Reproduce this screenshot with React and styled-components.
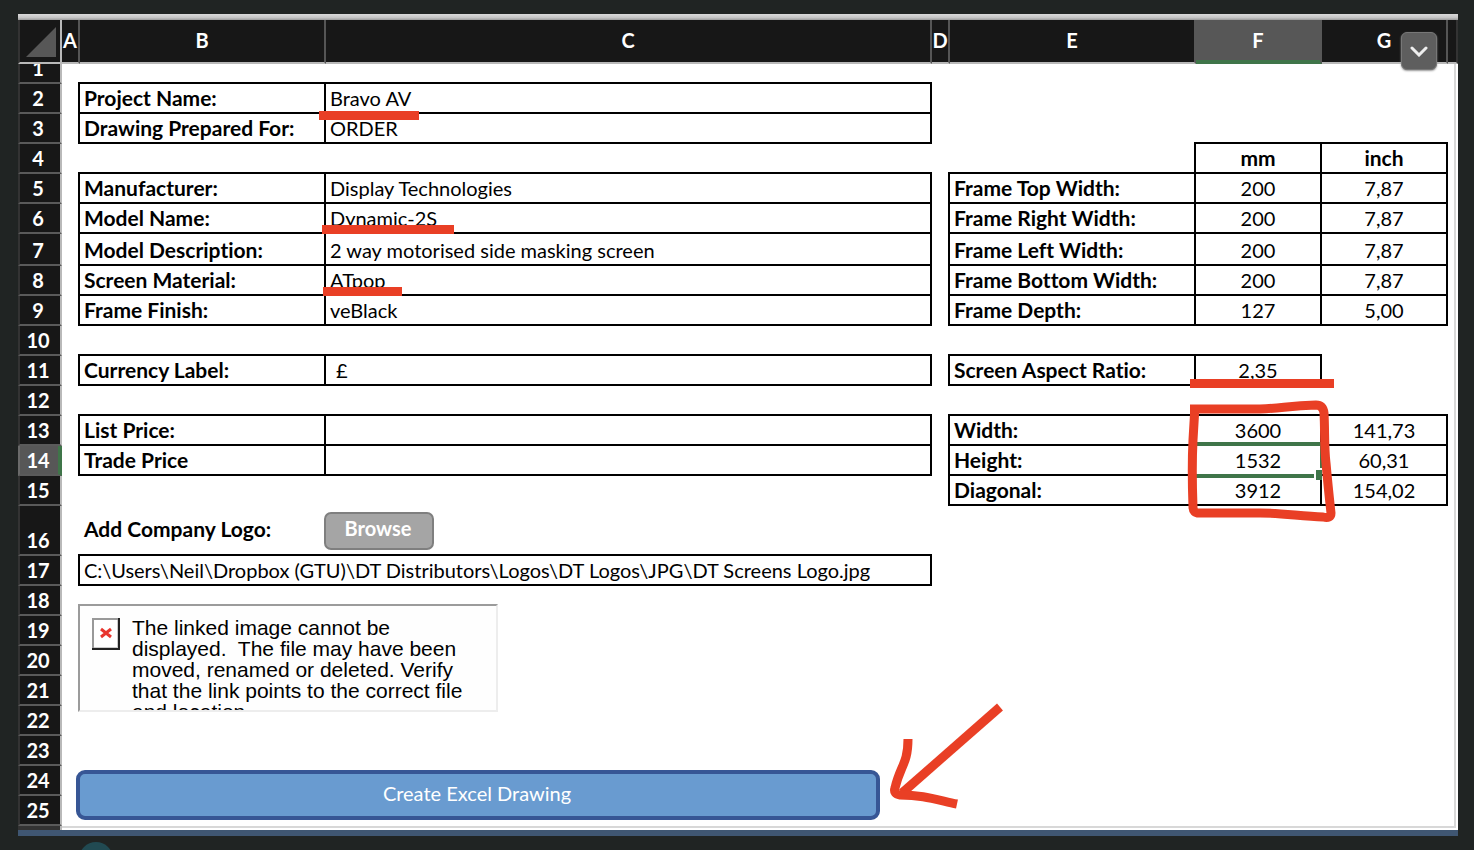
import React from 'react';
import styled, { createGlobalStyle } from 'styled-components';

const GlobalStyle = createGlobalStyle`
  *, *::before, *::after { box-sizing: border-box; }
  body {
    margin: 0;
    background: #202423;
    font-family: Lato, Carlito, 'Open Sans', sans-serif;
    font-size: 20px;
    line-height: 28px;
    font-variant-ligatures: none;
    color: #000;
  }
`;

const RED = '#e93f25';
const GREEN = '#3f7549';
const HEAD = '#171717';
const HEAD_ACTIVE = '#575757';

const Page = styled.div`
  display: flex;
  flex-direction: column;
  min-height: 100vh;
  padding: 14px 16px 0 18px;
`;

const Window = styled.main`
  border-bottom: 6px solid #3f5672;
  background: #fff;
`;

const TopBar = styled.div`
  height: 6px;
  background: linear-gradient(#dadada, #c4c4c4 60%, #9a9a9a);
`;

const Dock = styled.footer`
  flex: 1 1 0;
  min-height: 14px;
  overflow: hidden;
  display: flex;
  align-items: flex-start;
  padding: 6px 0 0 61px;
  height: 14px;
`;

const DockDot = styled.span`
  flex: none;
  width: 34px;
  height: 34px;
  border-radius: 50%;
  background: #214a52;
`;

const Sheet = styled.table`
  width: 100%;
  table-layout: fixed;
  border-collapse: separate;
  border-spacing: 0;
`;

const Col = styled.col`
  width: ${(p) => (p.$w ? `${p.$w}px` : 'auto')};
`;

const ColumnHead = styled.th`
  position: relative;
  height: 44px;
  padding: 0 0 2px;
  text-align: center;
  font-weight: 700;
  color: #fff;
  background: ${(p) => (p.$active ? HEAD_ACTIVE : HEAD)};
  border-right: 2px solid ${(p) => (p.$active ? HEAD_ACTIVE : p.$edge || '#555')};
  border-bottom: 2px solid ${(p) => (p.$active ? GREEN : '#b9b9b9')};
  box-shadow: ${(p) => (p.$active ? `inset 0 -2px ${GREEN}` : 'none')};
`;

const Corner = styled(ColumnHead)`
  border-left: 2px solid #333;
  border-right-color: #b9b9b9;
`;

const CornerMark = styled.svg`
  display: block;
  margin: 4px 0 0 6px;
`;

const RowHead = styled.th`
  height: ${(p) => p.$h}px;
  padding: 0 ${(p) => (p.$active ? 2 : 4)}px 0 0;
  vertical-align: bottom;
  text-align: center;
  font-weight: 700;
  color: #fff;
  background: ${(p) => (p.$active ? HEAD_ACTIVE : HEAD)};
  border-left: 2px solid ${(p) => (p.$active ? '#6a6a6a' : '#333')};
  border-bottom: 2px solid #5a5a5a;
  border-right: ${(p) => (p.$active ? `4px solid ${GREEN}` : '2px solid #b9b9b9')};
`;

const RowNumber = styled.div`
  display: flex;
  align-items: flex-end;
  justify-content: center;
  height: ${(p) => p.$h}px;
  overflow: hidden;
`;

const Cell = styled.td`
  position: relative;
  padding: 0 0 ${(p) => (p.$middle ? 2 : 0)}px ${(p) => (p.$center ? 0 : p.$indent || 4)}px;
  vertical-align: ${(p) => (p.$middle ? 'middle' : 'bottom')};
  text-align: ${(p) => (p.$center ? 'center' : 'left')};
  font-size: ${(p) => (p.$bold ? 21 : 20)}px;
  font-weight: ${(p) => (p.$bold ? 700 : 400)};
  white-space: nowrap;
  border-right: 2px solid ${(p) => (p.$right ? '#000' : 'transparent')};
  border-bottom: 2px solid ${(p) => (p.$bottom ? '#000' : 'transparent')};
  ${(p) =>
    p.$corner &&
    'background: linear-gradient(#000, #000) right bottom / 2px 2px no-repeat border-box;'}
`;

const EdgeCell = styled.td`
  padding: 0;
  box-shadow: inset -2px 0 #fff, inset -4px 0 #d8d8d8;
`;

const StubHead = styled.td`
  height: 4px;
  padding: 0;
  background: #333;
  border-right: 2px solid #b9b9b9;
`;

const StubCell = styled.td`
  padding: 0;
  box-shadow: inset -2px 0 #fff, inset 0 2px #d8d8d8;
`;

const Underline = styled.span`
  position: absolute;
  z-index: 2;
  left: ${(p) => p.$left}px;
  top: ${(p) => p.$top}px;
  width: ${(p) => p.$width}px;
  height: 9px;
  background: ${RED};
`;

const Selection = styled.span`
  position: absolute;
  z-index: 1;
  inset: -4px -2px -4px 0;
  border: solid ${GREEN};
  border-width: 4px 2px 4px 0;

  &::after {
    content: '';
    position: absolute;
    right: -2px;
    bottom: -6px;
    width: 8px;
    height: 12px;
    background: ${GREEN};
    border: solid #fff;
    border-width: 2px 0 0 2px;
  }
`;

const Scribble = styled.svg`
  position: absolute;
  z-index: 3;
  left: -10px;
  top: -18px;
  overflow: visible;
  pointer-events: none;
`;

const ArrowMark = styled.svg`
  position: absolute;
  left: 100%;
  top: -70px;
  pointer-events: none;
`;

const MenuButton = styled.button`
  position: absolute;
  z-index: 2;
  top: 12px;
  right: 9px;
  display: flex;
  align-items: center;
  justify-content: center;
  width: 36px;
  height: 38px;
  padding: 0;
  border: 1px solid #777;
  border-radius: 6px;
  background: #5e5e5e;
  box-shadow: 0 1px 2px #999;
`;

const BrowseButton = styled.button`
  display: block;
  width: 110px;
  height: 38px;
  margin: 4px 0 0 -6px;
  padding: 0 2px 6px 0;
  border: 2px solid #7f7f7f;
  border-radius: 7px;
  background: #a5a5a5;
  color: #fff;
  font: inherit;
  font-weight: 700;
`;

const MissingImage = styled.div`
  position: absolute;
  z-index: 1;
  left: -2px;
  top: 18px;
  display: flex;
  align-items: flex-start;
  gap: 12px;
  width: 420px;
  height: 108px;
  padding: 12px;
  overflow: hidden;
  border: 2px solid #ededed;
  border-top-color: #9b9b9b;
  border-left-color: #9b9b9b;
  background: #fefefe;
`;

const BrokenIcon = styled.svg`
  flex: none;
`;

const MissingText = styled.p`
  width: 350px;
  margin: -1px 0 0;
  font-family: 'Liberation Sans', Arial, sans-serif;
  font-size: 21px;
  line-height: 21px;
  font-weight: 400;
  white-space: normal;
`;

const CreateArea = styled.div`
  position: absolute;
  z-index: 1;
  top: 4px;
  left: -4px;
  right: 50px;
`;

const CreateButton = styled.button`
  display: block;
  width: 100%;
  height: 50px;
  padding: 0 2px 4px 0;
  border: 4px solid #375695;
  border-radius: 9px;
  background: #699bd0;
  color: #fff;
  font: inherit;
  text-align: center;
`;

const ALL_COLUMNS = ['A', 'B', 'C', 'D', 'E', 'F', 'G'];

const VALUES = {
  2: { B: 'Project Name:', C: 'Bravo AV' },
  3: { B: 'Drawing Prepared For:', C: 'ORDER' },
  4: { F: 'mm', G: 'inch' },
  5: { B: 'Manufacturer:', C: 'Display Technologies', E: 'Frame Top Width:', F: '200', G: '7,87' },
  6: { B: 'Model Name:', C: 'Dynamic-2S', E: 'Frame Right Width:', F: '200', G: '7,87' },
  7: { B: 'Model Description:', C: '2 way motorised side masking screen', E: 'Frame Left Width:', F: '200', G: '7,87' },
  8: { B: 'Screen Material:', C: 'ATpop', E: 'Frame Bottom Width:', F: '200', G: '7,87' },
  9: { B: 'Frame Finish:', C: 'veBlack', E: 'Frame Depth:', F: '127', G: '5,00' },
  11: { B: 'Currency Label:', C: '£', E: 'Screen Aspect Ratio:', F: '2,35' },
  13: { B: 'List Price:', C: '', E: 'Width:', F: '3600', G: '141,73' },
  14: { B: 'Trade Price', C: '', E: 'Height:', F: '1532', G: '60,31' },
  15: { E: 'Diagonal:', F: '3912', G: '154,02' },
  17: { B: 'C:\\Users\\Neil\\Dropbox (GTU)\\DT Distributors\\Logos\\DT Logos\\JPG\\DT Screens Logo.jpg', C: '' },
};

const ROW_HEIGHTS = { 1: 20, 7: 32, 16: 50 };

const MARKS = {
  C2: <Underline $left={-7} $top={27} $width={100} />,
  C6: <Underline $left={-4} $top={21} $width={132} />,
  C8: <Underline $left={-3} $top={21} $width={79} />,
  F11: <Underline $left={-6} $top={23} $width={144} />,
  F13: (
    <Scribble width="154" height="128" viewBox="1186 398 154 128" fill="none" stroke={RED} strokeWidth="9" strokeLinejoin="round" aria-hidden="true">
      <path d="M1190 409H1260C1282 408 1289 406 1316 405Q1323 405 1324 413C1325 430 1324 447 1326 463C1328 486 1329 495 1331 513Q1331 519 1323 517C1300 516 1280 513 1260 513H1199Q1193 513 1193 507C1192 480 1192 460 1193 440L1195 406" />
    </Scribble>
  ),
  F14: <Selection />,
};

const boxed = (col, row) => VALUES[row] !== undefined && VALUES[row][col] !== undefined;

function GridCell({ col, row, ...rest }) {
  const next = ALL_COLUMNS[ALL_COLUMNS.indexOf(col) + 1];
  const self = boxed(col, row);
  return (
    <Cell
      $right={self || boxed(next, row)}
      $bottom={self || boxed(col, row + 1)}
      $corner={self || boxed(next, row) || boxed(col, row + 1) || boxed(next, row + 1)}
      $bold={col === 'B' || col === 'E' || row === 4}
      $center={col === 'F' || col === 'G'}
      $indent={row === 11 && col === 'C' ? 10 : 4}
      {...rest}
    >
      {self ? VALUES[row][col] : null}
      {MARKS[col + row]}
    </Cell>
  );
}

function LeftCells({ row }) {
  if (row === 16) {
    return (
      <>
        <Cell $bold $middle $bottom $corner>Add Company Logo:</Cell>
        <Cell $middle $bottom $corner><BrowseButton type="button">Browse</BrowseButton></Cell>
      </>
    );
  }
  if (row === 17) {
    return <GridCell col="B" row={17} colSpan={2} $bold={false} />;
  }
  if (row === 18) {
    return (
      <Cell colSpan={2} rowSpan={4}>
        <MissingImage>
          <BrokenIcon width="28" height="32" viewBox="0 0 28 32" aria-hidden="true">
            <rect width="28" height="32" fill="#222" />
            <rect width="26" height="30" fill="#999" />
            <rect x="2" y="2" width="24" height="28" fill="#ccc" />
            <rect x="2" y="2" width="23" height="27" fill="#fff" />
            <path d="M9 11L19 19M19 11L9 19" stroke="#e8352e" strokeWidth="3" />
          </BrokenIcon>
          <MissingText>
            The linked image cannot be displayed.{'\u00a0'} The file may have been moved, renamed or
            deleted. Verify that the link points to the correct file and location.
          </MissingText>
        </MissingImage>
      </Cell>
    );
  }
  if (row > 18 && row < 22) return null;
  if (row === 24) {
    return (
      <Cell colSpan={2} rowSpan={2}>
        <CreateArea>
          <CreateButton type="button">Create Excel Drawing</CreateButton>
          <ArrowMark width="130" height="120" viewBox="880 700 130 120" fill="none" stroke={RED} strokeWidth="9" strokeLinejoin="round" aria-hidden="true">
            <path d="M1000 707L902 793" />
            <path d="M908 739C908 764 900 766 895 788Q893 794 900 795C923 795 934 799 957 804" />
          </ArrowMark>
        </CreateArea>
      </Cell>
    );
  }
  if (row === 25) return null;
  return (
    <>
      <GridCell col="B" row={row} />
      <GridCell col="C" row={row} />
    </>
  );
}

function SheetRow({ row }) {
  const height = ROW_HEIGHTS[row] || 30;
  return (
    <tr>
      <RowHead scope="row" $h={height} $active={row === 14}>
        <RowNumber $h={height - 2}>{row}</RowNumber>
      </RowHead>
      <GridCell col="A" row={row} />
      <LeftCells row={row} />
      <GridCell col="D" row={row} />
      <GridCell col="E" row={row} />
      <GridCell col="F" row={row} />
      <GridCell col="G" row={row} />
      <EdgeCell />
    </tr>
  );
}

export default function App() {
  const rows = Array.from({ length: 25 }, (_, i) => i + 1);
  return (
    <>
      <GlobalStyle />
      <Page>
        <Window>
          <TopBar />
          <Sheet>
            <colgroup>
              <Col $w={44} />
              <Col $w={18} />
              <Col $w={246} />
              <Col />
              <Col $w={18} />
              <Col $w={246} />
              <Col $w={126} />
              <Col $w={126} />
              <Col $w={10} />
            </colgroup>
            <thead>
              <tr>
                <Corner as="td">
                  <CornerMark width="30" height="30" viewBox="0 0 30 30" aria-hidden="true">
                    <path d="M30 0V30H0Z" fill="#575757" />
                  </CornerMark>
                </Corner>
                {ALL_COLUMNS.map((name) => (
                  <ColumnHead
                    key={name}
                    scope="col"
                    $active={name === 'F'}
                    $edge={name === 'E' ? HEAD_ACTIVE : undefined}
                  >
                    {name}
                    {name === 'G' && (
                      <MenuButton type="button" aria-label="Show more">
                        <svg width="18" height="12" viewBox="0 0 18 12" fill="none" stroke="#eee" strokeWidth="3" strokeLinecap="round" aria-hidden="true">
                          <path d="M2 3L9 10L16 3" />
                        </svg>
                      </MenuButton>
                    )}
                  </ColumnHead>
                ))}
                <ColumnHead as="td" $edge="#333" />
              </tr>
            </thead>
            <tbody>
              {rows.map((row) => (
                <SheetRow key={row} row={row} />
              ))}
              <tr>
                <StubHead />
                <StubCell colSpan={8} />
              </tr>
            </tbody>
          </Sheet>
        </Window>
        <Dock>
          <DockDot />
        </Dock>
      </Page>
    </>
  );
}
